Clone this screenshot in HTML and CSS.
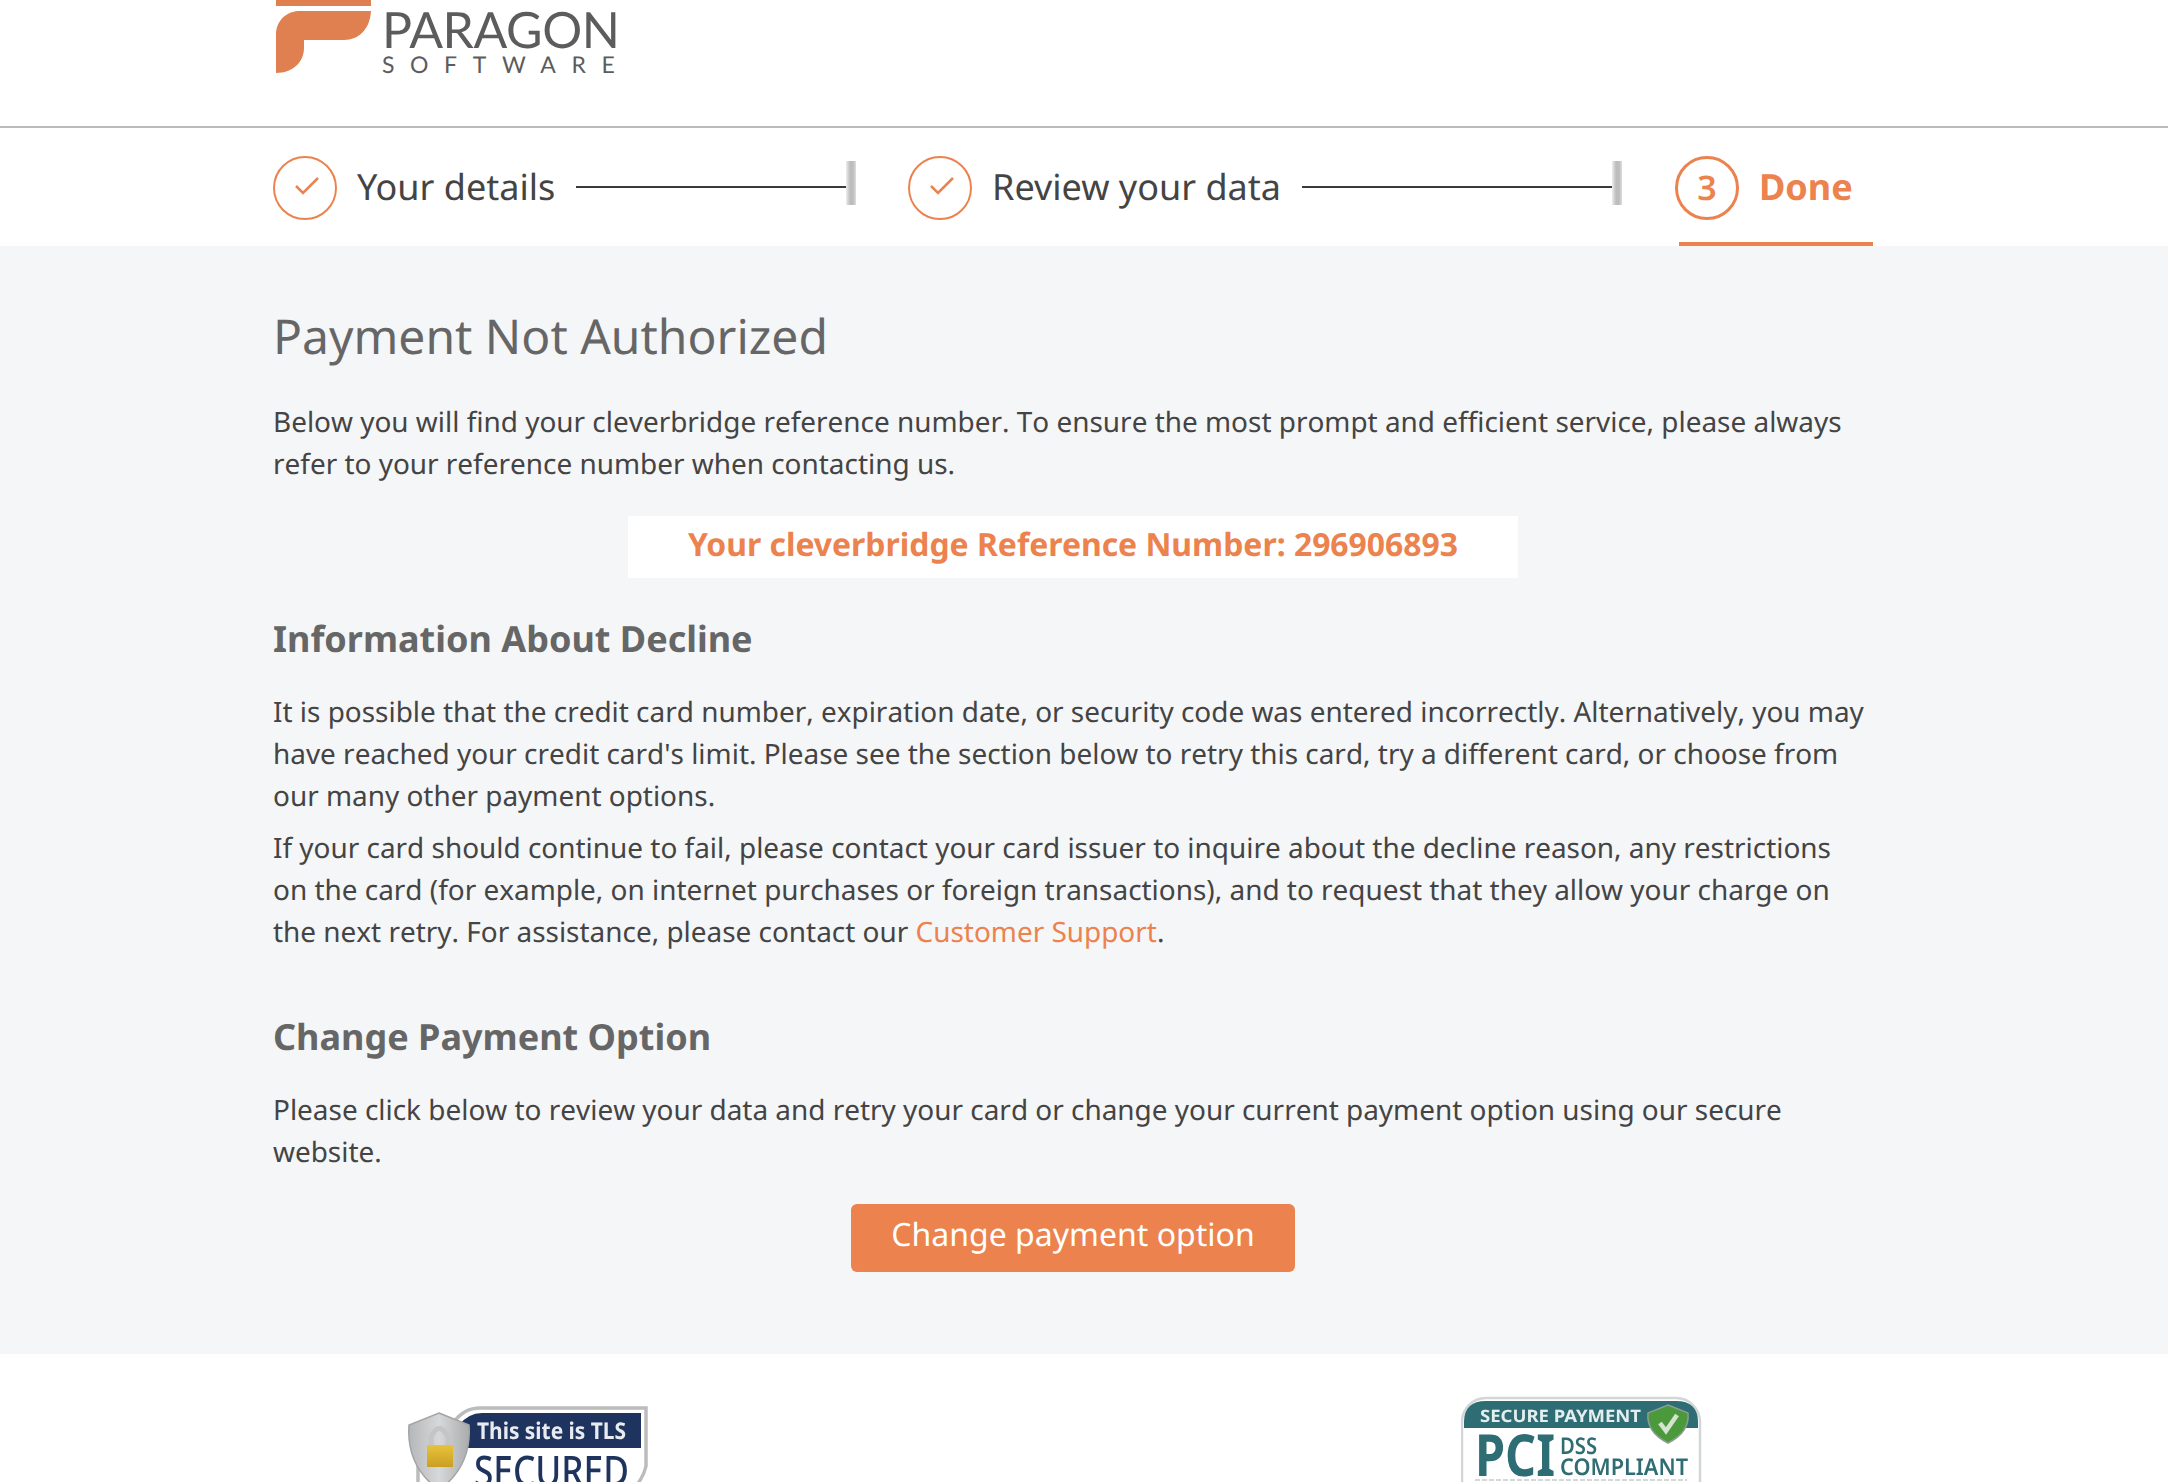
FILE: index.html
```html
<!DOCTYPE html>
<html lang="en">
<head>
    <meta charset="UTF-8">
    <title>Payment Not Authorized</title>
    <link rel="stylesheet" href="styles.css">
</head>
<body>
    <header class="header">
        <div class="logo">
            <svg class="logo-mark" width="95" height="73" viewBox="0 0 95 73">
                <path fill="#e07f4f" d="M0 0H95V6H0Z"/>
                <path fill="#e07f4f" d="M24 11H95C94 29 83 40 68 40H28V48C28 62 17 73 0 73V35C0 21 10 11 24 11Z"/>
            </svg>
            <div class="logo-text">
                <div class="logo-name">PARAGON</div>
                <div class="logo-sub">SOFTWARE</div>
            </div>
        </div>
    </header>

    <nav class="steps">
        <div class="steps-inner">
            <div class="step step-1">
                <span class="step-circle">
                    <svg class="step-check" width="24" height="20" viewBox="0 0 24 20"><path d="M1 10L8 17L23 2" fill="none" stroke="#ec824d" stroke-width="2.5"/></svg>
                </span>
                <span class="step-label">Your details</span>
                <span class="step-line"></span>
            </div>
            <div class="step step-2">
                <span class="step-circle">
                    <svg class="step-check" width="24" height="20" viewBox="0 0 24 20"><path d="M1 10L8 17L23 2" fill="none" stroke="#ec824d" stroke-width="2.5"/></svg>
                </span>
                <span class="step-label">Review your data</span>
                <span class="step-line"></span>
            </div>
            <div class="step step-3">
                <span class="step-circle step-circle-active">3</span>
                <span class="step-label step-label-active">Done</span>
            </div>
        </div>
    </nav>

    <main class="main">
        <div class="container">
            <h1>Payment Not Authorized</h1>
            <p class="intro">Below you will find your cleverbridge reference number. To ensure the most prompt and efficient service, please always refer to your reference number when contacting us.</p>
            <div class="reference">Your cleverbridge Reference Number: 296906893</div>
            <h2 class="decline-title">Information About Decline</h2>
            <p>It is possible that the credit card number, expiration date, or security code was entered incorrectly. Alternatively, you may have reached your credit card's limit. Please see the section below to retry this card, try a different card, or choose from our many other payment options.</p>
            <p class="next">If your card should continue to fail, please contact your card issuer to inquire about the decline reason, any restrictions on the card (for example, on internet purchases or foreign transactions), and to request that they allow your charge on the next retry. For assistance, please contact our <a href="#">Customer Support</a>.</p>
            <h2 class="change-title">Change Payment Option</h2>
            <p>Please click below to review your data and retry your card or change your current payment option using our secure website.</p>
            <div class="actions">
                <button class="btn">Change payment option</button>
            </div>
        </div>
    </main>

    <footer class="footer">
        <svg class="badge badge-tls" width="240" height="76" viewBox="0 0 240 76">
            <defs>
                <linearGradient id="gold" x1="0" y1="0" x2="0" y2="1">
                    <stop offset="0" stop-color="#e8c23c"/>
                    <stop offset="1" stop-color="#c99f22"/>
                </linearGradient>
                <linearGradient id="steel" x1="0" y1="0" x2="1" y2="0">
                    <stop offset="0" stop-color="#b4b6b8"/>
                    <stop offset="0.5" stop-color="#d6d8d9"/>
                    <stop offset="1" stop-color="#a9abad"/>
                </linearGradient>
            </defs>
            <path d="M46 16Q56 2 72 2H238V60Q236 70 228 80H10V40Z" fill="#fff" stroke="#bcbcbc" stroke-width="3.5"/>
            <path d="M50 20Q60 7 74 7H233V42H60Z" fill="#1f335f"/>
            <text x="69" y="33" textLength="149" lengthAdjust="spacingAndGlyphs" class="tls-title">This site is TLS</text>
            <text x="66" y="80" textLength="155" lengthAdjust="spacingAndGlyphs" class="tls-secured">SECURED</text>
            <path d="M31 7L61 19Q64 60 31 84Q-2 60 1 19Z" fill="url(#steel)" stroke="#a3a5a7" stroke-width="1.5"/>
            <path d="M23 40V31Q31 14 40 31V40" fill="none" stroke="#c4c5c6" stroke-width="5"/>
            <rect x="19" y="39" width="26" height="22" fill="url(#gold)"/>
        </svg>
        <svg class="badge badge-pci" width="241" height="86" viewBox="0 0 241 86">
            <rect x="1" y="2" width="238" height="120" rx="24" fill="#fff" stroke="#d2d6d6" stroke-width="2.5"/>
            <path d="M3 32V26Q3 5 25 5H215Q237 5 237 26V32Z" fill="#2f6d74"/>
            <text x="19" y="26" textLength="161" lengthAdjust="spacingAndGlyphs" class="pci-pay">SECURE PAYMENT</text>
            <path d="M207 9L227 17Q229 36 207 47Q185 36 187 17Z" fill="#4a9a3c" stroke="#8c9c92" stroke-width="1.5"/>
            <path d="M199 27L205 35L216 19" fill="none" stroke="#d6e2d2" stroke-width="4.5"/>
            <text x="14" y="80" textLength="80" lengthAdjust="spacingAndGlyphs" class="pci-big">PCI</text>
            <text x="99" y="58" textLength="37" lengthAdjust="spacingAndGlyphs" class="pci-small">DSS</text>
            <text x="99" y="79" textLength="128" lengthAdjust="spacingAndGlyphs" class="pci-small">COMPLIANT</text>
            <path d="M14 84H226" stroke="#c8cccc" stroke-width="1.5" stroke-dasharray="5 2"/>
        </svg>
    </footer>
</body>
</html>
```

FILE: styles.css
```css
html, body {
    margin: 0;
    padding: 0;
    height: 1482px;
    overflow: hidden;
}
body {
    font-family: "Noto Sans", Arial, sans-serif;
    font-size: 28px;
    line-height: 42px;
    color: #444;
    background-color: white;
    text-rendering: geometricPrecision;
}
.header {
    height: 126px;
    border-bottom: 2px solid #bbb;
    padding-left: 276px;
}
.logo {
    display: flex;
    align-items: flex-start;
}
.logo-mark {
    display: block;
}
.logo-text {
    margin-left: 11px;
    width: 232px;
    padding-top: 5px;
    color: #5c5c5c;
    font-family: Lato, Arial, sans-serif;
}
.logo-name {
    font-size: 50px;
    line-height: 49px;
    font-weight: 400;
    letter-spacing: -0.4px;
}
.logo-sub {
    font-size: 23px;
    line-height: 23px;
    letter-spacing: 15.6px;
    margin-top: -1px;
    white-space: nowrap;
}
.steps {
    height: 118px;
}
.steps-inner {
    display: flex;
    margin-left: 273px;
    width: 1600px;
    height: 118px;
}
.step {
    display: flex;
    align-items: center;
    height: 118px;
    box-sizing: border-box;
}
.step-1 {
    width: 635px;
}
.step-2 {
    width: 771px;
}
.step-3 {
    flex: 1;
    padding-top: 4px;
    border-bottom: 4px solid #ec824d;
}
.step-circle {
    flex: none;
    box-sizing: border-box;
    width: 64px;
    height: 64px;
    margin-top: 2px;
    border: 2px solid #ec824d;
    border-radius: 50%;
    display: flex;
    align-items: center;
    justify-content: center;
    color: #ec824d;
}
.step-check {
    margin: 0 0 4px 4px;
}
.step-circle-active {
    border-width: 3px;
    padding-bottom: 3px;
    font-size: 34px;
    font-weight: 600;
    margin-left: -4px;
}
.step-label {
    margin-left: 20px;
    font-size: 36px;
    white-space: nowrap;
    color: #444;
}
.step-label-active {
    font-weight: 700;
    color: #ec824d;
}
.step-line {
    position: relative;
    flex: 1;
    height: 2px;
    margin-left: 21px;
    background-color: #3a3a3a;
}
.step-line::after {
    content: "";
    position: absolute;
    right: 0;
    top: -25px;
    width: 10px;
    height: 44px;
    background: linear-gradient(to right, #eee, #bdbdbd 40%, #bdbdbd 70%, #ddd);
}
.step-1 .step-line {
    margin-right: 52px;
}
.step-2 .step-line {
    margin-right: 57px;
}
.main {
    height: 1108px;
    background-color: #f5f6f8;
    overflow: hidden;
}
.container {
    width: 1600px;
    margin-left: 273px;
    padding-top: 61px;
}
h1 {
    margin: 0;
    font-size: 48px;
    line-height: 60px;
    font-weight: 400;
    color: #666;
}
h2 {
    margin: 0;
    font-size: 36px;
    line-height: 50px;
    font-weight: 700;
    color: #666;
}
p {
    margin: 0;
    max-width: 1595px;
    font-size: 27.93px;
    font-kerning: none;
}
a {
    color: #ec824d;
    text-decoration: none;
}
.intro {
    margin-top: 34px;
}
.reference {
    width: 890px;
    height: 62px;
    margin: 31px auto 0;
    background-color: white;
    text-align: center;
    font-size: 31.9px;
    line-height: 58px;
    font-weight: 700;
    color: #ec824d;
}
.decline-title {
    margin-top: 36px;
    margin-bottom: 27px;
}
.next {
    margin-top: 10px;
}
.change-title {
    margin-top: 59px;
    margin-bottom: 27px;
}
.actions {
    margin-top: 31px;
    text-align: center;
}
.btn {
    width: 444px;
    height: 68px;
    padding: 0 0 8px;
    border: none;
    border-radius: 6px;
    background-color: #ec824d;
    color: white;
    font-family: inherit;
    font-size: 32px;
    text-rendering: geometricPrecision;
}
.footer {
    display: flex;
    gap: 813px;
    align-items: flex-start;
    padding-left: 408px;
}
.badge {
    display: block;
    flex: none;
    filter: blur(0.6px);
}
.badge-tls {
    margin-top: 52px;
}
.badge-pci {
    margin-top: 42px;
}
.tls-title {
    font-size: 23px;
    font-weight: 700;
    fill: #e8ebf0;
}
.tls-secured {
    font-size: 42px;
    font-weight: 500;
    fill: #1f335f;
}
.pci-pay {
    font-size: 17px;
    font-weight: 700;
    fill: #e3eeee;
}
.pci-big {
    font-size: 58px;
    font-weight: 700;
    fill: #2f6d74;
}
.pci-small {
    font-size: 23px;
    font-weight: 600;
    fill: #2f6d74;
}
```
